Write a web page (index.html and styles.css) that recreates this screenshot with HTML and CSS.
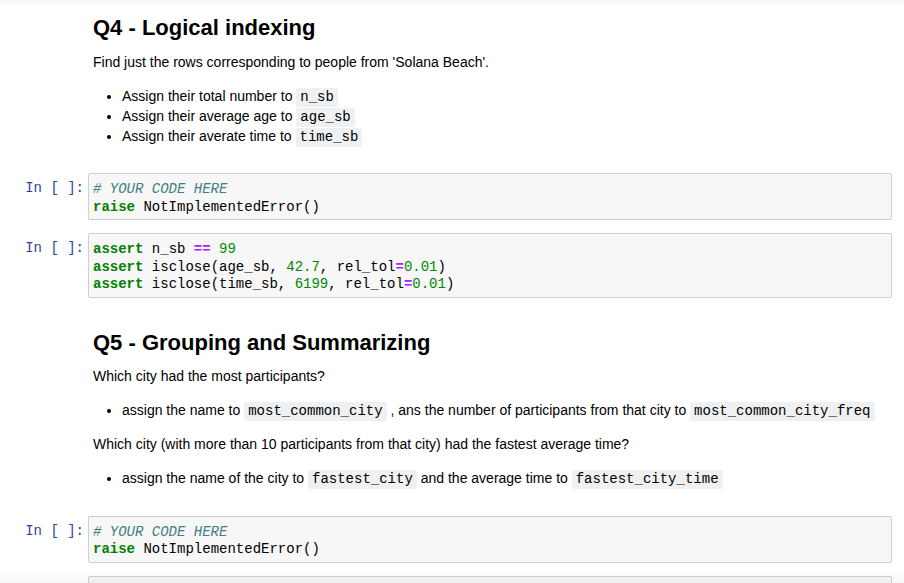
FILE: index.html
```html
<!DOCTYPE html>
<html>
<head>
<meta charset="utf-8">
<link rel="stylesheet" href="styles.css">
</head>
<body>
<div class="shade-top"></div>
<div class="notebook">
  <div class="cell md first">
    <div class="prompt"></div>
    <div class="content">
      <h2>Q4 - Logical indexing</h2>
      <p>Find just the rows corresponding to people from 'Solana Beach'.</p>
      <ul>
        <li>Assign their total number to <code>n_sb</code></li>
        <li>Assign their average age to <code>age_sb</code></li>
        <li>Assign their averate time to <code>time_sb</code></li>
      </ul>
    </div>
  </div>

  <div class="cell code">
    <div class="prompt">In&nbsp;[&nbsp;]:</div>
    <div class="input"><pre><span class="cm">#&nbsp;YOUR CODE HERE</span>
<span class="kw">raise</span> NotImplementedError()</pre></div>
  </div>

  <div class="cell code">
    <div class="prompt">In&nbsp;[&nbsp;]:</div>
    <div class="input"><pre><span class="kw">assert</span> n_sb <span class="op">==</span> <span class="num">99</span>
<span class="kw">assert</span> isclose(age_sb, <span class="num">42.7</span>, rel_tol<span class="op">=</span><span class="num">0.01</span>)
<span class="kw">assert</span> isclose(time_sb, <span class="num">6199</span>, rel_tol<span class="op">=</span><span class="num">0.01</span>)</pre></div>
  </div>

  <div class="cell md second">
    <div class="prompt"></div>
    <div class="content">
      <h2>Q5 - Grouping and Summarizing</h2>
      <p>Which city had the most participants?</p>
      <ul>
        <li>assign the name to <code>most_common_city</code> , ans the number of participants from that city to <code>most_common_city_freq</code></li>
      </ul>
      <p>Which city (with more than 10 participants from that city) had the fastest average time?</p>
      <ul>
        <li>assign the name of the city to <code>fastest_city</code> and the average time to <code>fastest_city_time</code></li>
      </ul>
    </div>
  </div>

  <div class="cell code">
    <div class="prompt">In&nbsp;[&nbsp;]:</div>
    <div class="input"><pre><span class="cm">#&nbsp;YOUR CODE HERE</span>
<span class="kw">raise</span> NotImplementedError()</pre></div>
  </div>

  <div class="cell code">
    <div class="prompt"></div>
    <div class="input"><pre>&nbsp;
&nbsp;</pre></div>
  </div>
</div>
<div class="shade-bottom"></div>
</body>
</html>
```

FILE: styles.css
```css
html, body {
  margin: 0;
  padding: 0;
  background: #ffffff;
  overflow: hidden;
  height: 583px;
}

body {
  font-family: "Liberation Sans", Arial, Helvetica, sans-serif;
  font-size: 14px;
  color: #000;
}

.shade-top {
  position: fixed;
  left: 0;
  right: 0;
  top: 0;
  height: 7px;
  background: linear-gradient(to bottom, rgba(0,0,0,0.035), rgba(0,0,0,0));
  z-index: 5;
}

.shade-bottom {
  position: fixed;
  left: 0;
  right: 0;
  bottom: 0;
  height: 14px;
  background: linear-gradient(to top, rgba(0,0,0,0.03), rgba(0,0,0,0));
  z-index: 5;
}

.notebook {
  display: flex;
  flex-direction: column;
  padding-top: 14px;
  width: 892px;
}

.cell {
  display: flex;
  flex-direction: row;
  align-items: flex-start;
}

.prompt {
  width: 84px;
  flex: none;
  margin-right: 4px;
  text-align: right;
  font-family: "Liberation Mono", "Courier New", monospace;
  font-size: 14px;
  line-height: 17px;
  color: #303f9f;
  padding-top: 7px;
  white-space: nowrap;
}

.content {
  flex: 1;
  padding-left: 5px;
}

.md.first {
  margin-bottom: 27px;
}

.md.second {
  margin-top: 18px;
  margin-bottom: 28px;
}

h2 {
  margin: 0 0 11px 0;
  font-size: 22px;
  line-height: 27px;
  font-weight: bold;
}

.second h2 {
  margin-bottom: 10px;
}

p {
  margin: 0 0 14px 0;
  line-height: 20px;
}

ul {
  margin: 0 0 14px 0;
  padding-left: 29px;
  line-height: 20px;
}

.content > :last-child {
  margin-bottom: 0;
}

code {
  font-family: "Liberation Mono", "Courier New", monospace;
  font-size: 14px;
  line-height: 1;
  background: #eff0f1;
  padding: 1px 4px 2px 4px;
  border-radius: 2px;
}

.code {
  margin-bottom: 13px;
}

.input {
  flex: 1;
  background: #f7f7f7;
  border: 1px solid #cfcfcf;
  border-radius: 2px;
  padding: 7px 4px 3px 4px;
}

pre {
  margin: 0;
  font-family: "Liberation Mono", "Courier New", monospace;
  font-size: 14px;
  line-height: 17.5px;
  color: #000;
}

.cm {
  color: #408080;
  font-style: italic;
}

.kw {
  color: #008000;
  font-weight: bold;
}

.op {
  color: #aa22ff;
  font-weight: bold;
}

.num {
  color: #008800;
}
```
